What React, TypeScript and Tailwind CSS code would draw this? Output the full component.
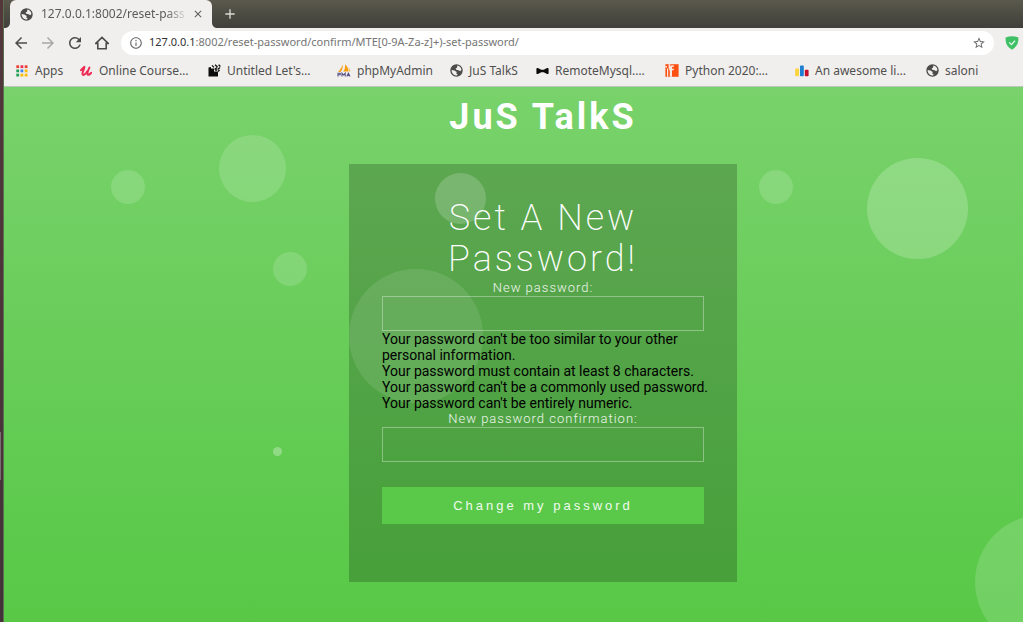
import { useState } from "react"
import type { FormEvent, ReactNode } from "react"
import {
    MdAdd,
    MdArrowBack,
    MdArrowForward,
    MdClose,
    MdInfoOutline,
    MdRefresh,
    MdStarBorder,
} from "react-icons/md"

function GlobeIcon() {
    return (
        <svg width="13" height="13" viewBox="0 0 13 13" className="flex-none">
            <circle cx="6.5" cy="6.5" r="6.2" fill="#4b4b4b" />
            <path d="M7.4 1.6 C9.6 1.8 11.3 3.8 11.4 6 L10.2 7.2 L8.6 6.2 L6.2 5.8 L5.6 4.6 L7 3.8 Z" fill="#f1efed" />
            <path d="M1.6 6 L4.4 6.4 L6.8 8 L6.2 9.6 L7.6 10.2 L7 11.5 C4 11.6 1.6 9.4 1.6 6 Z" fill="#f1efed" />
        </svg>
    )
}

function HomeIcon() {
    return (
        <svg width="14" height="14" viewBox="0 0 14 14" fill="none" stroke="currentColor" strokeWidth="1.6">
            <path d="M0.8 7.4 L7 1.4 L13.2 7.4 H11.2 V12.8 H2.8 V7.4 Z" />
        </svg>
    )
}

function ShieldIcon() {
    return (
        <svg width="14" height="14" viewBox="0 0 14 14">
            <path d="M7 0.3 C9 0.3 11.3 0.7 13.4 1.5 C13.6 7 12.2 10.6 7 13.7 C1.8 10.6 0.4 7 0.6 1.5 C2.7 0.7 5 0.3 7 0.3 Z" fill="#3fc065" />
            <path d="M4.2 6.4 L6.4 8.6 L10 4.8" fill="none" stroke="#e4f7ea" strokeWidth="1.3" />
        </svg>
    )
}

const appColors = ['#ea4335', '#e8334a', '#ea4335', '#1fa055', '#4285f4', '#fbbc05', '#1fa055', '#fbbc05', '#fbbc05']

function AppsIcon() {
    return (
        <svg width="12" height="12" viewBox="0 0 12 12">
            {appColors.map((color, i) => (
                <rect key={i} x={0.3 + (i % 3) * 4.2} y={0.3 + Math.floor(i / 3) * 4.2} width="2.8" height="2.8" fill={color} />
            ))}
        </svg>
    )
}

function CourseIcon() {
    return (
        <svg width="12" height="12" viewBox="0 0 12 12" fill="none" stroke="#ee2c55" strokeLinecap="round" strokeLinejoin="round">
            <path d="M0.9 5.2 C2 4.4 3.4 2.6 4.4 1.9 C4.2 4.4 2.2 7 2.5 9 C2.8 10.8 5.4 9.8 7.2 6.4" strokeWidth="2" />
            <path d="M9.4 2.6 C8.2 5 7 8 7.6 9.3 C8.4 10.4 10 9.2 11.3 7.8" strokeWidth="2" />
        </svg>
    )
}

function ClapperIcon() {
    return (
        <svg width="13" height="13" viewBox="0 0 13 13">
            <path d="M0.5 3.6 L3 3 V4.4 H6 V7.4 H10 V12.6 H0.5 Z" fill="#0c0c0c" />
            <path d="M4 1.4 L6 3.4 M7 0.8 L9.6 3 M10.6 0.8 L12.4 2.4 M6.6 5.4 L9 3.4 M9.6 5.6 L12 3.6 M7.4 6.6 L9 5.6 M10 7.4 L11.6 6" stroke="#0c0c0c" strokeWidth="1.3" />
        </svg>
    )
}

function PmaIcon() {
    return (
        <svg width="14" height="13" viewBox="0 0 14 13">
            <path d="M5.4 0.6 C6.2 3 5.6 6 3.6 8 H1 C3 6 4.8 3.6 5.4 0.6 Z" fill="#f6a11c" />
            <path d="M8 0.2 C10.6 2.4 11.6 5 11.4 7.6 H6.2 C7.8 5.6 8.4 3 8 0.2 Z" fill="#f89c0e" />
            <path d="M11.2 3.2 C12.6 4.6 13.4 6 13.4 7.4 H12 C12.1 6 11.8 4.6 11.2 3.2 Z" fill="#fbb95a" />
            <path d="M1 12.4 V9.2 H3.2 V10.8 H1 M5 12.4 V9.2 L6.6 11 L8.2 9.2 V12.4 M9.8 12.4 L11.4 9.2 L13 12.4 M10.4 11.4 H12.4" fill="none" stroke="#56518a" strokeWidth="1.1" />
        </svg>
    )
}

function BowTieIcon() {
    return (
        <svg width="13" height="8" viewBox="0 0 13 8">
            <path d="M0.4 1.6 C1 0.6 2 0.8 5.2 2.8 H7.8 C11 0.8 12 0.6 12.6 1.6 V6.4 C12 7.4 11 7.2 7.8 5.2 H5.2 C2 7.2 1 7.4 0.4 6.4 Z" fill="#0c0c0c" />
        </svg>
    )
}

function FreeIcon() {
    return (
        <svg width="14" height="13" viewBox="0 0 14 13">
            <rect x="0.4" y="0.2" width="13.2" height="12.6" fill="#fb5012" />
            <path d="M0.4 2 H2 V3.4 H0.4 Z M2 4.6 H3.2 V12.8 H2 Z M3.6 0.2 H5.4 V4.6 H3.6 Z M4.4 4.6 H5.4 V3.4 C5.4 1.8 6.4 1.2 8.8 1.4 V2.8 C7.4 2.7 7 3 7 4.2 V4.8 H8.8 V6.2 H7 V12.8 H4.8 V6.2 H4 Z" fill="#fbe9e2" />
        </svg>
    )
}

function ChartIcon() {
    return (
        <svg width="14" height="12" viewBox="0 0 14 12">
            <rect x="0.2" y="3.6" width="3.8" height="7.6" rx="0.8" fill="#fcd43b" />
            <rect x="5" y="0.4" width="3.8" height="10.8" rx="0.8" fill="#1e7fd2" />
            <rect x="9.8" y="4.8" width="3.8" height="6.4" rx="0.8" fill="#c8102e" />
        </svg>
    )
}

const bookmarks: { label: string; width: string; icon: ReactNode }[] = [
    { label: 'Apps', width: 'w-16', icon: <AppsIcon /> },
    { label: 'Online Course…', width: 'w-32', icon: <CourseIcon /> },
    { label: "Untitled Let's…", width: 'w-[130px]', icon: <ClapperIcon /> },
    { label: 'phpMyAdmin', width: 'w-28', icon: <PmaIcon /> },
    { label: 'JuS TalkS', width: 'w-[86px]', icon: <GlobeIcon /> },
    { label: 'RemoteMysql.…', width: 'w-[130px]', icon: <BowTieIcon /> },
    { label: 'Python 2020:…', width: 'w-[130px]', icon: <FreeIcon /> },
    { label: 'An awesome li…', width: 'w-[130px]', icon: <ChartIcon /> },
    { label: 'saloni', width: 'w-16', icon: <GlobeIcon /> },
]

const bubbles = [
    'left-[107px] top-[83px] size-[34px] bg-white/15',
    'left-[215px] top-[48px] size-[67px] bg-white/15',
    'left-[269px] top-[165px] size-[34px] bg-white/15',
    'left-[269px] top-[360px] size-[9px] bg-white/30',
    'left-[431px] top-[86px] size-[51px] bg-white/18',
    'left-[345px] top-[182px] size-[134px] bg-white/10',
    'left-[755px] top-[83px] size-[34px] bg-white/15',
    'left-[863px] top-[71px] size-[101px] bg-white/20',
    'left-[971px] top-[428px] size-[134px] bg-white/15',
]

const hints = [
    "Your password can't be too similar to your other personal information.",
    'Your password must contain at least 8 characters.',
    "Your password can't be a commonly used password.",
    "Your password can't be entirely numeric.",
]

function TabStrip() {
    return (
        <div className="flex h-7 items-stretch bg-linear-to-b from-[#5a594c] to-[#403f3a] pl-1.5">
            <div className="relative flex w-[202px] items-center rounded-t-md bg-[#f1efed] pr-2 pl-2.5 text-[#5b5b5b]">
                <svg className="absolute bottom-0 -left-1.5" width="6" height="6" viewBox="0 0 6 6">
                    <path d="M6 0 V6 H0 C4 6 6 4 6 0 Z" fill="#f1efed" />
                </svg>
                <svg className="absolute -right-1.5 bottom-0" width="6" height="6" viewBox="0 0 6 6">
                    <path d="M0 0 V6 H6 C2 6 0 4 0 0 Z" fill="#f1efed" />
                </svg>
                <GlobeIcon />
                <span className="ml-2 flex-1 mask-r-from-85% text-xs whitespace-nowrap">
                    127.0.0.1:8002/reset-pass
                </span>
                <button type="button" aria-label="Close tab" className="ml-1">
                    <MdClose size={12} />
                </button>
            </div>
            <button type="button" aria-label="New tab" className="ml-2.5 text-[#dcdad2]">
                <MdAdd size={16} />
            </button>
        </div>
    )
}

function Toolbar() {
    const [url, setUrl] = useState('127.0.0.1:8002/reset-password/confirm/MTE[0-9A-Za-z]+)-set-password/')
    const slash = url.indexOf(':')

    return (
        <div className="flex h-[29px] items-center pr-1 pl-2 text-[#4c4c4c]">
            <div className="flex flex-none items-center gap-[9px]">
                <button type="button" aria-label="Back"><MdArrowBack size={18} /></button>
                <button type="button" aria-label="Forward" className="text-[#a9a8a6]"><MdArrowForward size={18} /></button>
                <button type="button" aria-label="Reload"><MdRefresh size={18} /></button>
                <button type="button" aria-label="Home" className="pl-0.5"><HomeIcon /></button>
            </div>
            <div className="ml-3 flex h-6 flex-1 items-center rounded-full bg-white px-2">
                <MdInfoOutline size={14} className="text-[#6b6b6b]" />
                <label className="relative ml-1.5 flex-1 text-[11px]">
                    {/* host is drawn darker than the path, the input itself only holds the caret */}
                    <span className="pointer-events-none block whitespace-nowrap text-[#757575]">
                        <span className="text-[#333]">{url.slice(0, slash)}</span>{url.slice(slash)}
                    </span>
                    <input
                        aria-label="Address"
                        value={url}
                        onChange={(e) => setUrl(e.target.value)}
                        className="absolute inset-0 w-full bg-transparent text-transparent caret-black outline-none"
                    />
                </label>
                <button type="button" aria-label="Bookmark this page" className="text-[#6b6b6b]"><MdStarBorder size={14} /></button>
            </div>
            <button type="button" aria-label="Shield" className="ml-[11px]"><ShieldIcon /></button>
        </div>
    )
}

export default function App() {
    const [password, setPassword] = useState('')
    const [confirmation, setConfirmation] = useState('')

    const handleSubmit = (e: FormEvent) => {
        e.preventDefault()
    }

    return (
        <div className="relative flex min-h-screen bg-linear-to-b from-[#53373b] to-[#43323a] pl-[3px] font-['Noto_Sans',sans-serif]">
            {/* Scroll notch of the desktop behind the window */}
            <div className="absolute top-[432px] left-0 h-12 w-px bg-[#7a6c70]" />

            <div className="flex min-w-0 flex-1 flex-col border-l border-[#5b6e50] bg-[#f1efed]">
                <TabStrip />
                <Toolbar />
                <nav className="flex h-[30px] items-center overflow-hidden border-b border-[#b9c8b2] pb-0.5 pl-[11px] text-xs text-[#505050]">
                    {bookmarks.map((item) => (
                        <a key={item.label} href="#" className={`flex flex-none items-center gap-1.5 whitespace-nowrap ${item.width}`}>
                            <span className="flex w-3.5 flex-none justify-center">{item.icon}</span>
                            {item.label}
                        </a>
                    ))}
                </nav>

                <main className="relative flex flex-1 flex-col items-center overflow-hidden bg-linear-to-b from-[#79d26b] via-[#5dca4d] via-80% to-[#59c847] pb-10 pl-[59px] font-[Roboto,sans-serif]">
                    <h1 className="mt-2.5 text-4xl leading-[41px] font-bold tracking-[3px] text-white">JuS TalkS</h1>

                    <form onSubmit={handleSubmit} className="mt-[26px] w-full max-w-[388px] bg-black/20 px-[33px] pt-[34px] pb-[58px]">
                        <div className="relative z-10 flex flex-col">
                            <h2 className="text-center text-4xl leading-[41px] font-extralight tracking-[3px] text-white">
                                Set A New Password!
                            </h2>
                            <label htmlFor="new-password" className="text-center text-[13px] leading-4 font-light tracking-[1px] text-white/90">
                                New password:
                            </label>
                            <input
                                id="new-password"
                                type="password"
                                value={password}
                                onChange={(e) => setPassword(e.target.value)}
                                className="h-[35px] border border-white/35 bg-transparent px-3 text-white outline-none"
                            />
                            <ul className="-mr-4 text-sm leading-4 text-black">
                                {hints.map((hint) => <li key={hint}>{hint}</li>)}
                            </ul>
                            <label htmlFor="confirm-password" className="text-center text-[13px] leading-4 font-light tracking-[1px] text-white/90">
                                New password confirmation:
                            </label>
                            <input
                                id="confirm-password"
                                type="password"
                                value={confirmation}
                                onChange={(e) => setConfirmation(e.target.value)}
                                className="h-[35px] border border-white/35 bg-transparent px-3 text-white outline-none"
                            />
                            <button type="submit" className="mt-[25px] h-[37px] bg-[#5ac94a] font-['Liberation_Sans',sans-serif] text-[13px] tracking-[3px] text-white/90">
                                Change my password
                            </button>
                        </div>
                    </form>

                    {/* Floating bubbles */}
                    {bubbles.map((bubble) => (
                        <div key={bubble} className={`pointer-events-none absolute rounded-full ${bubble}`} />
                    ))}
                </main>
            </div>
        </div>
    )
}
